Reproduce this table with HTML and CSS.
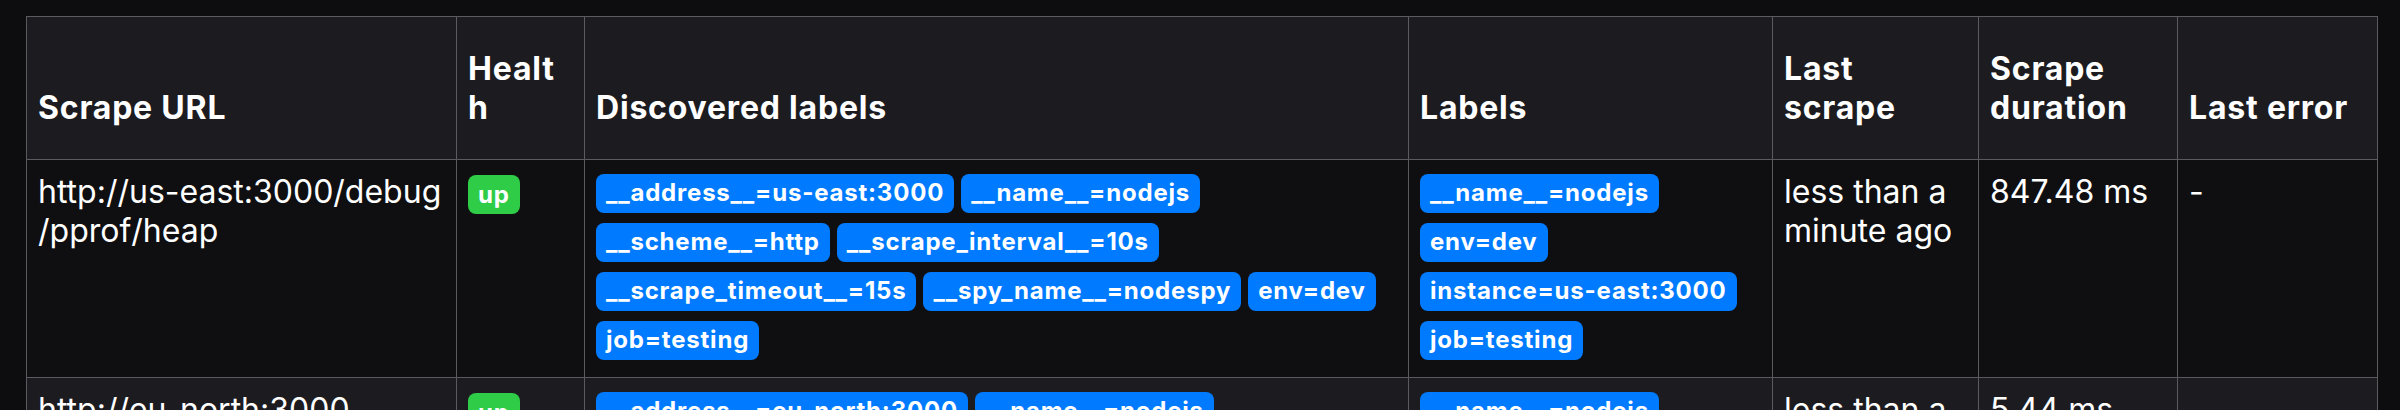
FILE: index.html
```html
<!DOCTYPE html>
<html lang="en">
<head>
<meta charset="utf-8">
<title>Targets</title>
<link rel="stylesheet" href="styles.css">
</head>
<body>
<div class="page">
  <table class="targets">
    <colgroup>
      <col class="c-url">
      <col class="c-health">
      <col class="c-disc">
      <col class="c-labels">
      <col class="c-last">
      <col class="c-dur">
      <col class="c-err">
    </colgroup>
    <thead>
      <tr>
        <th>Scrape URL</th>
        <th>Health</th>
        <th>Discovered labels</th>
        <th>Labels</th>
        <th>Last scrape</th>
        <th>Scrape duration</th>
        <th>Last error</th>
      </tr>
    </thead>
    <tbody>
      <tr>
        <td>http://us-east:3000<wbr>/debug<wbr>/pprof<wbr>/heap</td>
        <td><span class="badge badge-up">up</span></td>
        <td>
          <div class="labels">
            <span class="badge">__address__=us-east:3000</span>
            <span class="badge">__name__=nodejs</span>
            <span class="badge">__scheme__=http</span>
            <span class="badge">__scrape_interval__=10s</span>
            <span class="badge">__scrape_timeout__=15s</span>
            <span class="badge">__spy_name__=nodespy</span>
            <span class="badge">env=dev</span>
            <span class="badge">job=testing</span>
          </div>
        </td>
        <td>
          <div class="labels">
            <span class="badge">__name__=nodejs</span>
            <span class="badge">env=dev</span>
            <span class="badge">instance=us-east:3000</span>
            <span class="badge">job=testing</span>
          </div>
        </td>
        <td>less than a minute ago</td>
        <td>847.48 ms</td>
        <td>-</td>
      </tr>
      <tr>
        <td>http://eu-north:3000<wbr>/debug<wbr>/pprof<wbr>/heap</td>
        <td><span class="badge badge-up">up</span></td>
        <td>
          <div class="labels">
            <span class="badge">__address__=eu-north:3000</span>
            <span class="badge">__name__=nodejs</span>
            <span class="badge">__scheme__=http</span>
            <span class="badge">__scrape_interval__=10s</span>
            <span class="badge">__scrape_timeout__=15s</span>
            <span class="badge">__spy_name__=nodespy</span>
            <span class="badge">env=dev</span>
            <span class="badge">job=testing</span>
          </div>
        </td>
        <td>
          <div class="labels">
            <span class="badge">__name__=nodejs</span>
            <span class="badge">env=dev</span>
            <span class="badge">instance=eu-north:3000</span>
            <span class="badge">job=testing</span>
          </div>
        </td>
        <td>less than a minute ago</td>
        <td>5.44 ms</td>
        <td>-</td>
      </tr>
    </tbody>
  </table>
</div>
</body>
</html>
```

FILE: styles.css
```css
html, body {
  margin: 0;
  background: #0d0d10;
}

body {
  font-family: Inter, "Noto Sans", sans-serif;
  color: #ffffff;
  font-size: 32px;
}

.page {
  padding: 16px 22px 24px 26px;
}

.targets {
  width: 100%;
  table-layout: fixed;
  border-collapse: separate;
  border-spacing: 0;
  border-left: 1px solid #5a5a5f;
  border-top: 1px solid #5a5a5f;
}

.c-url { width: 430px; }
.c-health { width: 128px; }
.c-disc { width: 824px; }
.c-labels { width: 364px; }
.c-last { width: 206px; }
.c-dur { width: 199px; }
.c-err { width: 200px; }

.targets th,
.targets td {
  border-right: 1px solid #5a5a5f;
  border-bottom: 1px solid #5a5a5f;
  text-align: left;
  line-height: normal;
  padding: 12px 11px;
  vertical-align: top;
}

.targets th {
  background: #1c1c20;
  font-weight: 700;
  letter-spacing: 0.8px;
  vertical-align: bottom;
  padding: 32px 14px 31.6px 11px;
  overflow-wrap: anywhere;
}

.targets td {
  font-weight: 400;
}

.targets tbody tr:nth-child(odd) td {
  background: #0f0f12;
}

.targets tbody tr:nth-child(even) td {
  background: #1c1c20;
}

.labels {
  display: flex;
  flex-wrap: wrap;
  gap: 9.7px 7px;
  padding: 2px 0 4.5px;
}

.badge {
  display: inline-block;
  background: #007bff;
  color: #ffffff;
  font-size: 24px;
  font-weight: 700;
  letter-spacing: 0.8px;
  line-height: 1;
  padding: 7.7px 10px;
  border-radius: 8px;
  white-space: nowrap;
}

.badge-up {
  background: #2ecc47;
  margin-top: 2px;
}
```
